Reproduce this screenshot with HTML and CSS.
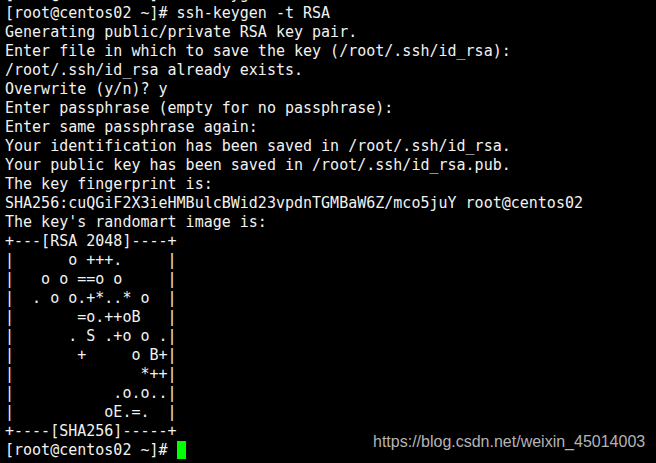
FILE: index.html
```html
<!DOCTYPE html>
<html>
<head>
<meta charset="utf-8">
<link rel="stylesheet" href="styles.css">
</head>
<body>
<pre class="term">[root@centos02 ~]# ssh-keygen
[root@centos02 ~]# ssh-keygen -t RSA
Generating public/private RSA key pair.
Enter file in which to save the key (/root/.ssh/id_rsa):
/root/.ssh/id_rsa already exists.
Overwrite (y/n)? y
Enter passphrase (empty for no passphrase):
Enter same passphrase again:
Your identification has been saved in /root/.ssh/id_rsa.
Your public key has been saved in /root/.ssh/id_rsa.pub.
The key fingerprint is:
SHA256:cuQGiF2X3ieHMBulcBWid23vpdnTGMBaW6Z/mco5juY root@centos02
The key's randomart image is:
+---[RSA 2048]----+
|      o +++.     |
|   o o ==o o     |
|  . o o.+*..* o  |
|       =o.++oB   |
|      . S .+o o .|
|       +     o B+|
|              *++|
|           .o.o..|
|          oE.=.  |
+----[SHA256]-----+
[root@centos02 ~]# <span class="cursor"></span></pre>
<div class="watermark">https://blog.csdn.net/weixin_45014003</div>
</body>
</html>
```

FILE: styles.css
```css
html, body {
  margin: 0;
  padding: 0;
  background: #000;
  width: 656px;
  height: 463px;
  overflow: hidden;
  position: relative;
}
.term {
  margin: -15px 0 0 0;
  padding: 0 0 0 5px;
  font-family: "DejaVu Sans Mono", monospace;
  font-size: 15px;
  line-height: 19px;
  color: #f2f2f2;
}
.cursor {
  display: inline-block;
  width: 9px;
  height: 18px;
  background: #00ff00;
  vertical-align: -4px;
}
.watermark {
  position: absolute;
  left: 373px;
  top: 433px;
  font-family: "Liberation Sans", Arial, sans-serif;
  font-size: 16px;
  color: #b4b4b4;
}
```
